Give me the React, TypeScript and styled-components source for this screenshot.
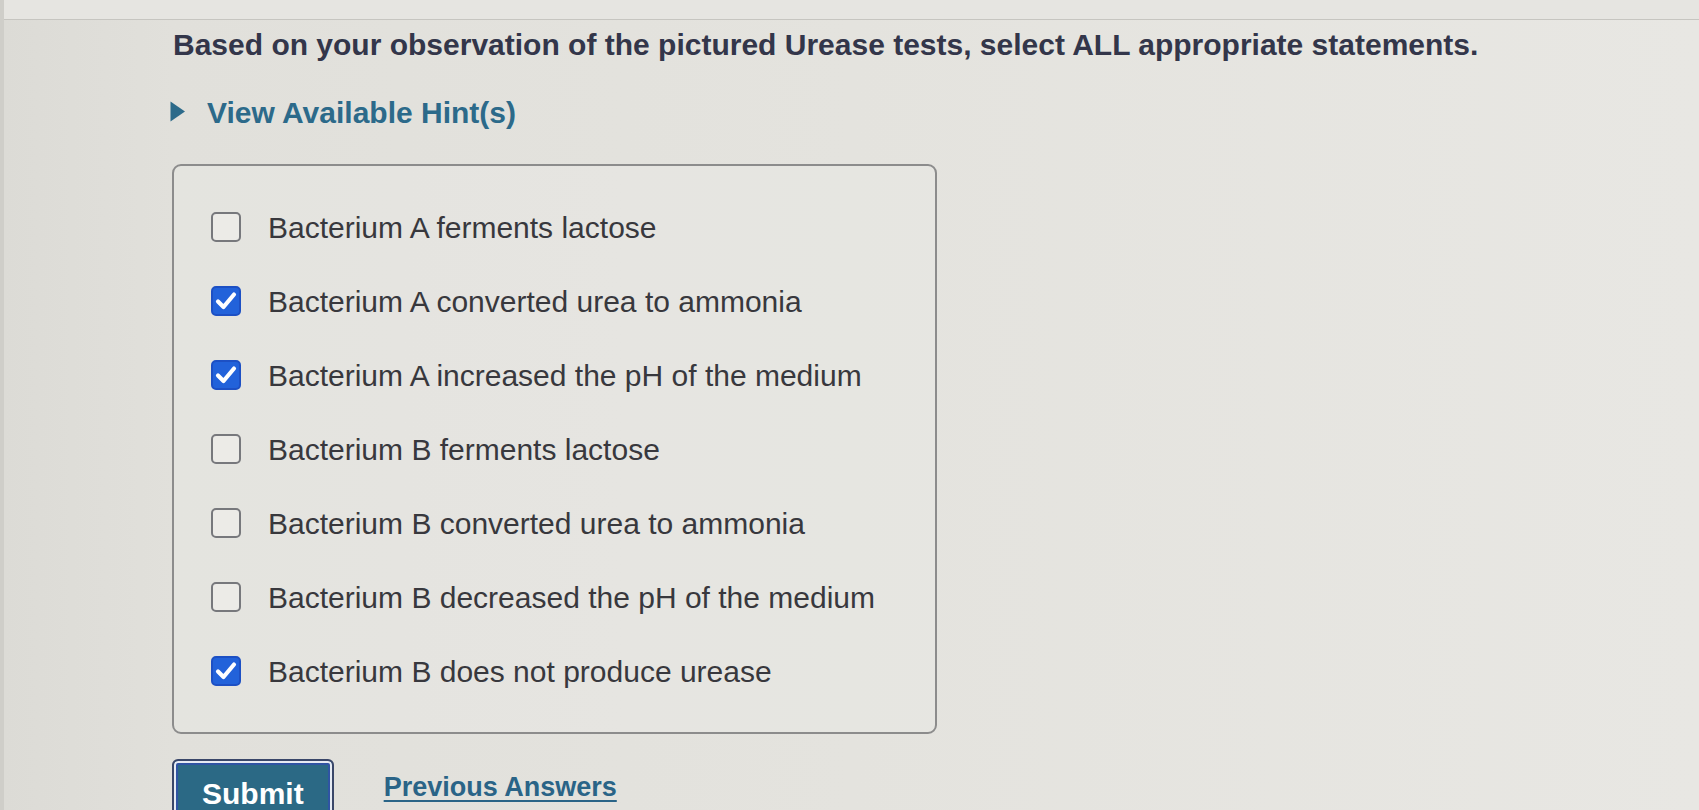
import React from "react";
import styled, { createGlobalStyle } from "styled-components";

const GlobalStyle = createGlobalStyle`
  html, body {
    margin: 0;
    padding: 0;
  }
  body {
    width: 1699px;
    height: 810px;
    overflow: hidden;
    font-family: "Liberation Sans", Arial, Helvetica, sans-serif;
    background: #e4e3de;
  }
`;

const Page = styled.div`
  width: 1699px;
  height: 810px;
  overflow: hidden;
  box-sizing: border-box;
  border-left: 4px solid #cfcec9;
  background: linear-gradient(
    90deg,
    #dcdbd6 0%,
    #e1e0db 10%,
    #e4e3de 50%,
    #e8e7e3 100%
  );
`;

const TopBar = styled.div`
  height: 19px;
  border-bottom: 1px solid #c6c5c0;
  background: #e6e5e1;
`;

const Content = styled.main`
  display: flex;
  flex-direction: column;
  align-items: flex-start;
  padding-left: 168px;
`;

const Title = styled.h1`
  margin: 7px 0 0 1px;
  font-size: 30px;
  line-height: 36px;
  font-weight: 700;
  color: #33364a;
`;

const HintToggle = styled.button`
  display: flex;
  align-items: center;
  gap: 21px;
  margin: 32px 0 0 -3px;
  padding: 0;
  border: 0;
  background: none;
  font-family: inherit;
  font-size: 30px;
  line-height: 36px;
  font-weight: 700;
  color: #2c6a8a;
  cursor: pointer;
`;

const Caret = styled.svg`
  width: 17px;
  height: 23px;
  flex: none;
  margin-top: -3px;
`;

const OptionsBox = styled.fieldset`
  box-sizing: border-box;
  width: 765px;
  margin: 33px 0 0 0;
  padding: 22px 20px 26px 37px;
  border: 2px solid #8c8c8c;
  border-radius: 9px;
  background: rgba(236, 235, 231, 0.35);
  display: flex;
  flex-direction: column;
`;

const OptionRow = styled.label`
  height: 74px;
  display: flex;
  align-items: center;
  gap: 27px;
  cursor: pointer;
`;

const Box = styled.span<{ $checked: boolean }>`
  box-sizing: border-box;
  width: 30px;
  height: 30px;
  flex: none;
  margin-top: 3px;
  border-radius: 5px;
  display: flex;
  align-items: center;
  justify-content: center;
  border: 2px solid ${(p) => (p.$checked ? "#1d50c4" : "#77787c")};
  background: ${(p) => (p.$checked ? "#2262da" : "#ecebe7")};
`;

const LabelText = styled.span`
  padding-top: 6px;
  font-size: 30px;
  line-height: 36px;
  color: #38383d;
`;

const Actions = styled.div`
  display: flex;
  align-items: flex-start;
  gap: 50px;
  margin-top: 25px;
`;

const SubmitButton = styled.button`
  box-sizing: border-box;
  padding: 15px 28px 20px 28px;
  border: 2px solid #3a4769;
  border-radius: 6px;
  background: #2b6985;
  box-shadow: inset 0 0 0 2px #e6ebf3, inset 0 0 0 4px #2f54a3;
  font-family: inherit;
  font-size: 30px;
  line-height: 36px;
  font-weight: 700;
  color: #ffffff;
  cursor: pointer;
`;

const PrevLink = styled.a`
  margin-top: 12px;
  font-size: 27px;
  line-height: 32px;
  font-weight: 700;
  color: #2a6487;
  text-decoration: underline;
  text-underline-offset: 4px;
  text-decoration-thickness: 2px;
  cursor: pointer;
`;

const options: { text: string; checked: boolean }[] = [
  { text: "Bacterium A ferments lactose", checked: false },
  { text: "Bacterium A converted urea to ammonia", checked: true },
  { text: "Bacterium A increased the pH of the medium", checked: true },
  { text: "Bacterium B ferments lactose", checked: false },
  { text: "Bacterium B converted urea to ammonia", checked: false },
  { text: "Bacterium B decreased the pH of the medium", checked: false },
  { text: "Bacterium B does not produce urease", checked: true },
];

const CheckMark = () => (
  <svg width="24" height="24" viewBox="0 0 24 24" aria-hidden="true">
    <path
      d="M4 12.5 L9.5 18 L20 5.5"
      fill="none"
      stroke="#ffffff"
      strokeWidth="4.2"
      strokeLinecap="round"
      strokeLinejoin="round"
    />
  </svg>
);

export default function App() {
  return (
    <>
      <GlobalStyle />
      <Page>
        <TopBar />
        <Content>
          <Title>
            Based on your observation of the pictured Urease tests, select ALL
            appropriate statements.
          </Title>
          <HintToggle type="button">
            <Caret viewBox="0 0 17 23" aria-hidden="true">
              <path d="M1.5 1.5 L16 11.5 L1.5 21.5 Z" fill="#2c6a8a" />
            </Caret>
            <span>View Available Hint(s)</span>
          </HintToggle>
          <OptionsBox>
            {options.map((o) => (
              <OptionRow key={o.text}>
                <Box $checked={o.checked}>{o.checked && <CheckMark />}</Box>
                <LabelText>{o.text}</LabelText>
              </OptionRow>
            ))}
          </OptionsBox>
          <Actions>
            <SubmitButton type="button">Submit</SubmitButton>
            <PrevLink>Previous Answers</PrevLink>
          </Actions>
        </Content>
      </Page>
    </>
  );
}
